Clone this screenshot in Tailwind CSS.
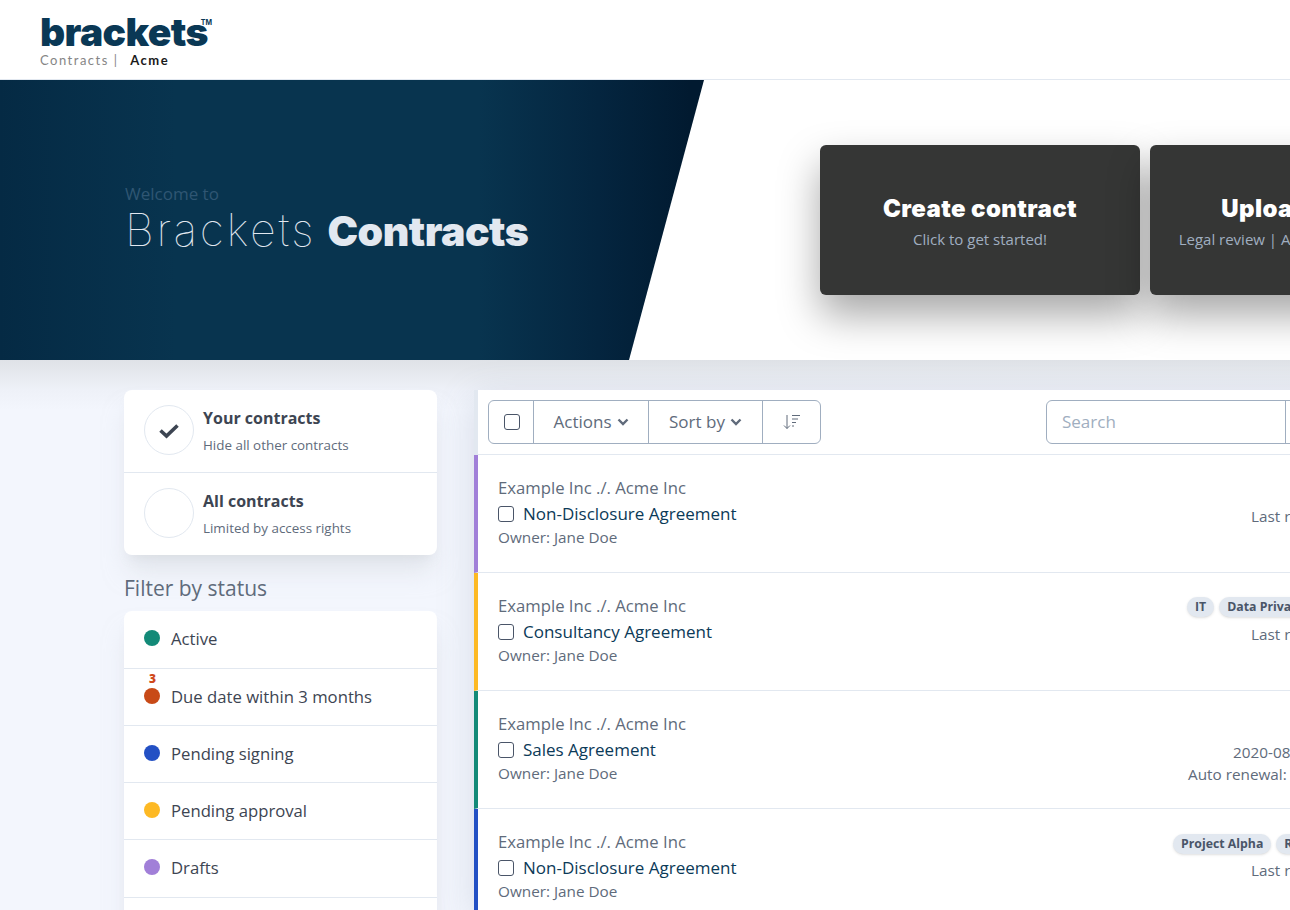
<!DOCTYPE html>
<html lang="en">

<head>
    <meta charset="UTF-8" />
    <meta name="viewport" content="width=device-width, initial-scale=1" />
    <title>Brackets Contracts</title>
    <script src="https://cdn.jsdelivr.net/npm/@tailwindcss/browser@4"></script>
</head>

<body class="h-screen overflow-hidden bg-[#f3f6fd] font-['Open_Sans',sans-serif] text-[#4a5568]">
    <!-- Top bar -->
    <header class="h-20 bg-white border-b border-[#e2e8f0] pl-10 pt-[11px]">
        <div class="w-[180px]">
            <div class="font-['Inter',sans-serif] text-[39px] leading-[42px] font-black tracking-[-0.6px] text-[#0a3855] whitespace-nowrap">brackets<span class="-ml-[7px] text-[7px] leading-none font-bold align-top relative top-[8px] tracking-normal">TM</span></div>
            <div class="font-['Lato',sans-serif] text-[13px] leading-[15px] tracking-[1.5px] text-[#858585] whitespace-nowrap">Contracts | <span class="ml-[7px] font-bold text-[#1a1a1a]">Acme</span></div>
        </div>
    </header>

    <!-- Hero -->
    <section class="flex h-[280px] bg-white">
        <div class="w-[704px] shrink-0 pl-[125px] pt-[104px] [clip-path:polygon(0_0,100%_0,629px_100%,0_100%)] bg-[linear-gradient(to_right,#052a44_0%,#08344f_25%,#08344f_68%,#04253f_85%,#011a30_98%)]">
            <div class="text-[17px] leading-5 text-[#2f5673]">Welcome to</div>
            <h1 class="font-['Inter',sans-serif] text-[45px] leading-[52px] text-[#e2e8f0] font-thin tracking-[2.6px] whitespace-nowrap">Brackets <span class="-ml-[4px] font-black tracking-[-0.5px] text-[41px]">Contracts</span></h1>
        </div>
        <div class="flex gap-[10px] ml-[116px] mt-[65px] h-[150px]">
            <div class="w-[320px] shrink-0 rounded-md bg-[#353635] shadow-[0_20px_40px_rgba(0,0,0,0.35)] flex flex-col items-center pt-[46px]">
                <div class="font-['Inter',sans-serif] text-2xl leading-9 font-black text-white tracking-[0.4px]">Create contract</div>
                <div class="text-[15px] leading-5 mt-[2px] text-[#a0aec0]">Click to get started!</div>
            </div>
            <div class="w-[320px] shrink-0 rounded-md bg-[#353635] shadow-[0_20px_40px_rgba(0,0,0,0.35)] flex flex-col items-center pt-[46px]">
                <div class="font-['Inter',sans-serif] text-2xl leading-9 font-black text-white tracking-[0.4px]">Upload signed</div>
                <div class="text-[15px] leading-5 mt-[2px] text-[#a0aec0] whitespace-nowrap">Legal review | Approval | Negotiation</div>
            </div>
        </div>
    </section>

    <!-- Content -->
    <div class="flex gap-[37px] pl-[124px] pt-[30px] bg-[linear-gradient(#dfe2e7,#eef1f8_30px,#f3f6fd_50px)] h-[550px]">
        <aside class="w-[313px] shrink-0">
            <div class="bg-white rounded-lg shadow-xl shadow-gray-300/50">
                <div class="flex items-center h-[83px] pl-5 border-b border-[#e2e8f0]">
                    <span class="-mt-[2px] w-[50px] h-[50px] rounded-full border border-[#e2e8f0] flex items-center justify-center">
                        <svg class="w-[22px] h-[22px]" viewBox="0 0 22 22" fill="none" stroke="#3d4552" stroke-width="3.6"><path d="M2.5 11.5l6 5.5L19.5 6.5" /></svg>
                    </span>
                    <div class="ml-[9px] -mt-[2px]">
                        <div class="text-base leading-6 font-bold text-[#3d4552]">Your contracts</div>
                        <div class="text-[13.4px] leading-5 mt-[5px] text-[#606b7b]">Hide all other contracts</div>
                    </div>
                </div>
                <div class="flex items-center h-[82px] pl-5">
                    <span class="-mt-[2px] w-[50px] h-[50px] rounded-full border border-[#e2e8f0]"></span>
                    <div class="ml-[9px] -mt-[2px]">
                        <div class="text-base leading-6 font-bold text-[#3d4552]">All contracts</div>
                        <div class="text-[13.4px] leading-5 mt-[5px] text-[#606b7b]">Limited by access rights</div>
                    </div>
                </div>
            </div>

            <h2 class="text-[21px] leading-7 mt-[19px] mb-[9px] text-[#606b7b]">Filter by status</h2>

            <div class="bg-white rounded-lg shadow-xl shadow-gray-300/50 text-[16.7px] text-[#3d4552]">
                <div class="flex items-center gap-[11px] h-[58px] pb-[2px] pl-5 border-b border-[#e2e8f0]"><span class="-mt-[2px] w-4 h-4 rounded-full bg-[#138a78]"></span>Active</div>
                <div class="relative flex items-center gap-[11px] h-[57px] pl-5 border-b border-[#e2e8f0]">
                    <span class="-mt-[2px] w-4 h-4 rounded-full bg-[#c84a17]"></span>Due date within 3 months
                    <span class="absolute left-[25px] top-[4px] text-xs leading-3 font-black text-[#d04a1a]">3</span>
                </div>
                <div class="flex items-center gap-[11px] h-[57px] pl-5 border-b border-[#e2e8f0]"><span class="-mt-[2px] w-4 h-4 rounded-full bg-[#2350c4]"></span>Pending signing</div>
                <div class="flex items-center gap-[11px] h-[57px] pl-5 border-b border-[#e2e8f0]"><span class="-mt-[2px] w-4 h-4 rounded-full bg-[#fdb924]"></span>Pending approval</div>
                <div class="flex items-center gap-[11px] h-[58px] pb-[2px] pl-5 border-b border-[#e2e8f0]"><span class="-mt-[2px] w-4 h-4 rounded-full bg-[#a17fd8]"></span>Drafts</div>
                <div class="flex items-center gap-[11px] h-[57px] pl-5"><span class="-mt-[2px] w-4 h-4 rounded-full bg-[#718096]"></span>Terminated</div>
            </div>
        </aside>

        <main class="w-[940px] shrink-0 bg-white border-l-4 border-[#e2e8f0] shadow-[0_8px_36px_rgba(100,116,139,0.2)]">
            <!-- Toolbar -->
            <div class="flex items-center justify-between h-[65px] pl-[10px] border-b border-[#e2e8f0]">
                <div class="flex h-11 border border-[#a0aec0] rounded-md text-[17px] text-[#606b7b]">
                    <div class="w-[45px] pl-[1px] flex items-center justify-center border-r border-[#a0aec0]">
                        <span class="w-4 h-4 rounded-[3px] border border-[#4a5568]"></span>
                    </div>
                    <div class="w-[115px] flex items-center justify-center gap-[5px] border-r border-[#a0aec0]">Actions
                        <svg class="w-[12px] h-[12px]" viewBox="0 0 12 12" fill="none" stroke="#606b7b" stroke-width="2.4"><path d="M1.5 3.5L6 8l4.5-4.5" /></svg>
                    </div>
                    <div class="w-[114px] flex items-center justify-center gap-[5px] border-r border-[#a0aec0]">Sort by
                        <svg class="w-[12px] h-[12px]" viewBox="0 0 12 12" fill="none" stroke="#606b7b" stroke-width="2.4"><path d="M1.5 3.5L6 8l4.5-4.5" /></svg>
                    </div>
                    <div class="w-[57px] flex items-center justify-center">
                        <svg class="w-[18px] h-[16px]" viewBox="0 0 18 16" fill="none" stroke="#606b7b" stroke-width="1"><path d="M4 1v13.5M1 11.5l3 3 3-3M9 1.5h8M9 5h6M9 8.5h4M9 12h2" /></svg>
                    </div>
                </div>
                <div class="flex h-11 w-[360px] mr-2 border border-[#a0aec0] rounded-md text-[17px] text-[#a0aec0]">
                    <div class="w-[239px] pl-[15px] flex items-center border-r border-[#a0aec0]">Search</div>
                </div>
            </div>

            <!-- Contract rows -->
            <div class="relative h-[118px] border-b border-[#e2e8f0] pl-5 pt-[22px] -ml-1 border-l-4 border-l-[#a17fd8]">
                <div class="text-[16.7px] leading-[22px] text-[#606b7b]">Example Inc ./. Acme Inc</div>
                <div class="flex items-center gap-[9px] text-[17px] leading-[30px] text-[#0b3a58]"><span class="w-4 h-4 rounded-[3px] border border-[#4a5568]"></span>Non-Disclosure Agreement</div>
                <div class="-mt-[1px] text-[15.3px] leading-[18px] text-[#606b7b]">Owner: Jane Doe</div>
                <div class="absolute left-[773px] top-[49px] text-[15.3px] leading-6 text-[#606b7b] whitespace-nowrap">Last reviewed: 2 days ago</div>
            </div>
            <div class="relative h-[118px] border-b border-[#e2e8f0] pl-5 pt-[22px] -ml-1 border-l-4 border-l-[#fdb924]">
                <div class="text-[16.7px] leading-[22px] text-[#606b7b]">Example Inc ./. Acme Inc</div>
                <div class="flex items-center gap-[9px] text-[17px] leading-[30px] text-[#0b3a58]"><span class="w-4 h-4 rounded-[3px] border border-[#4a5568]"></span>Consultancy Agreement</div>
                <div class="-mt-[1px] text-[15.3px] leading-[18px] text-[#606b7b]">Owner: Jane Doe</div>
                <div class="absolute left-[709px] top-[24px] flex gap-[5px] text-[12.3px] leading-5 font-bold text-[#4a5568] whitespace-nowrap">
                    <span class="px-2 rounded-full bg-[#e2e8f0] shadow-sm">IT</span>
                    <span class="px-2 rounded-full bg-[#e2e8f0] shadow-sm">Data Privacy</span>
                </div>
                <div class="absolute left-[773px] top-[49px] text-[15.3px] leading-6 text-[#606b7b] whitespace-nowrap">Last reviewed: 2 days ago</div>
            </div>
            <div class="relative h-[118px] border-b border-[#e2e8f0] pl-5 pt-[22px] -ml-1 border-l-4 border-l-[#138a78]">
                <div class="text-[16.7px] leading-[22px] text-[#606b7b]">Example Inc ./. Acme Inc</div>
                <div class="flex items-center gap-[9px] text-[17px] leading-[30px] text-[#0b3a58]"><span class="w-4 h-4 rounded-[3px] border border-[#4a5568]"></span>Sales Agreement</div>
                <div class="-mt-[1px] text-[15.3px] leading-[18px] text-[#606b7b]">Owner: Jane Doe</div>
                <div class="absolute left-[710px] top-[50px] text-[15.3px] leading-[22px] text-[#606b7b] whitespace-nowrap">
                    <div class="pl-[45px]">2020-08-31</div>
                    <div>Auto renewal: 2021-08-31</div>
                </div>
            </div>
            <div class="relative h-[118px] pl-5 pt-[22px] -ml-1 border-l-4 border-l-[#2350c4]">
                <div class="text-[16.7px] leading-[22px] text-[#606b7b]">Example Inc ./. Acme Inc</div>
                <div class="flex items-center gap-[9px] text-[17px] leading-[30px] text-[#0b3a58]"><span class="w-4 h-4 rounded-[3px] border border-[#4a5568]"></span>Non-Disclosure Agreement</div>
                <div class="-mt-[1px] text-[15.3px] leading-[18px] text-[#606b7b]">Owner: Jane Doe</div>
                <div class="absolute left-[695px] top-[25px] flex gap-[5px] text-[12.3px] leading-5 font-bold text-[#4a5568] whitespace-nowrap">
                    <span class="px-2 rounded-full bg-[#e2e8f0] shadow-sm">Project Alpha</span>
                    <span class="px-2 rounded-full bg-[#e2e8f0] shadow-sm">Region</span>
                </div>
                <div class="absolute left-[773px] top-[49px] text-[15.3px] leading-6 text-[#606b7b] whitespace-nowrap">Last reviewed: 2 days ago</div>
            </div>
        </main>
    </div>
</body>

</html>
